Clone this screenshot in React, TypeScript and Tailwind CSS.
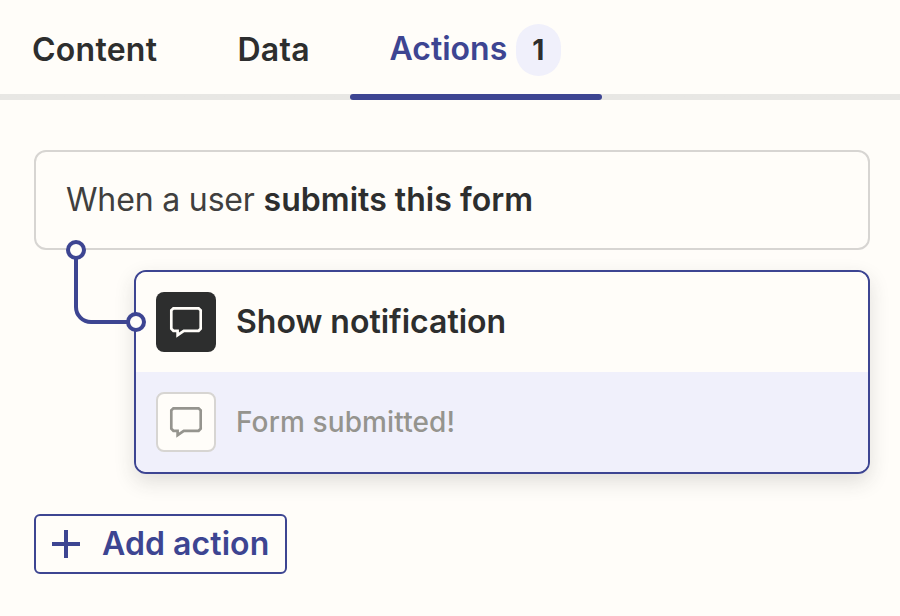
import React from 'react';

type Tab = {
  label: string;
  count?: number;
};

const tabs: Tab[] = [
  { label: 'Content' },
  { label: 'Data' },
  { label: 'Actions', count: 1 },
];

const MessageIcon: React.FC = () => (
  <svg className="shrink-0" width="36" height="36" viewBox="0 0 36 36" fill="none" stroke="currentColor" strokeWidth="2.67" aria-hidden="true">
    <path d="M5.4 4.3H30.6L32.7 6.4V24.7L30.6 26.8H15.8L9.6 31.2V26.8H5.4L3.3 24.7V6.4Z" />
  </svg>
);

const Connector: React.FC = () => (
  <svg className="absolute left-[64px] top-[238px]" width="84" height="96" viewBox="0 0 84 96" fill="none" stroke="#3d4592" aria-hidden="true">
    <path d="M12 20V69A15 15 0 0 0 27 84H64" strokeWidth="4" />
    <circle cx="12" cy="12" r="8" fill="#fffdf9" strokeWidth="4" />
    <circle cx="72" cy="84" r="8" fill="#fffdf9" strokeWidth="4" />
  </svg>
);

const App: React.FC = () => {
  return (
    <main className="relative h-[616px] w-[900px] overflow-hidden bg-[#fffdf9] font-['Inter',sans-serif] text-[#2d2e2e]">
      <nav className="flex h-[100px] bg-linear-to-b from-transparent from-94% to-[#e8e7e4] to-94%">
        {tabs.map((tab) => (
          <a
            key={tab.label}
            className={
              tab.count
                ? 'flex h-[100px] w-[252px] flex-col text-[32px] font-semibold text-[#3d4592]'
                : 'flex h-[100px] items-center pl-[40.5px] text-[32px] font-semibold tracking-[0.25px] first:w-[197px] first:pl-8 nth-2:w-[153px]'
            }
          >
            {tab.count ? (
              <>
                <span className="flex h-[94px] items-center pt-[6px] pl-[39.5px]">
                  <span className="-mt-[2px]">{tab.label}</span>
                  <span className="ml-[8.5px] flex h-[52px] w-[45px] items-center justify-center rounded-full bg-[#f0f0fb] text-[28px] font-bold text-[#2d2e2e]">{tab.count}</span>
                </span>
                <span className="h-[6px] rounded-[3px] bg-[#3d4592]" />
              </>
            ) : (
              tab.label
            )}
          </a>
        ))}
      </nav>

      <div className="mt-[50px] ml-[34px] flex h-[100px] w-[836px] items-center rounded-[12px] border-2 border-[#d7d5d2] pl-[30px] text-[32px] text-[#403f3e]">
        <span className="tracking-[-0.16px]">When a user <b className="font-semibold tracking-[0.03px] text-[#2d2e2e]">submits this form</b></span>
      </div>

      <section className="mt-5 ml-[134px] h-[204px] w-[736px] overflow-hidden rounded-[12px] border-2 border-[#3d4592] shadow-[0_8px_20px_rgba(45,46,46,0.15)]">
        <div className="flex h-[100px] items-center gap-5 bg-[#fffdf9] pl-5 text-[32px] font-semibold">
          <span className="flex size-[60px] items-center justify-center rounded-[8px] bg-[#2d2e2e] text-[#fffdf9]"><MessageIcon /></span>
          Show notification
        </div>
        <div className="flex h-[100px] items-center gap-5 bg-[#f0f0fb] pl-5 text-[28px] font-medium tracking-[0.12px] text-[#95948e]">
          <span className="flex size-[60px] items-center justify-center rounded-[8px] border-2 border-[#d7d5d2] bg-[#fffdf9]"><MessageIcon /></span>
          Form submitted!
        </div>
      </section>

      <button className="mt-10 ml-[34px] flex h-[60px] w-[253px] items-center rounded-[6px] border-2 border-[#3d4592] pl-4 text-[32px] font-semibold tracking-[0.08px] whitespace-nowrap text-[#3d4592]">
        <svg className="mr-[22px] shrink-0" width="28" height="28" viewBox="0 0 28 28" stroke="currentColor" strokeWidth="4" aria-hidden="true">
          <path d="M14 0V28M0 14H28" />
        </svg>
        Add action
      </button>
      <Connector />
    </main>
  );
};

export default App;
